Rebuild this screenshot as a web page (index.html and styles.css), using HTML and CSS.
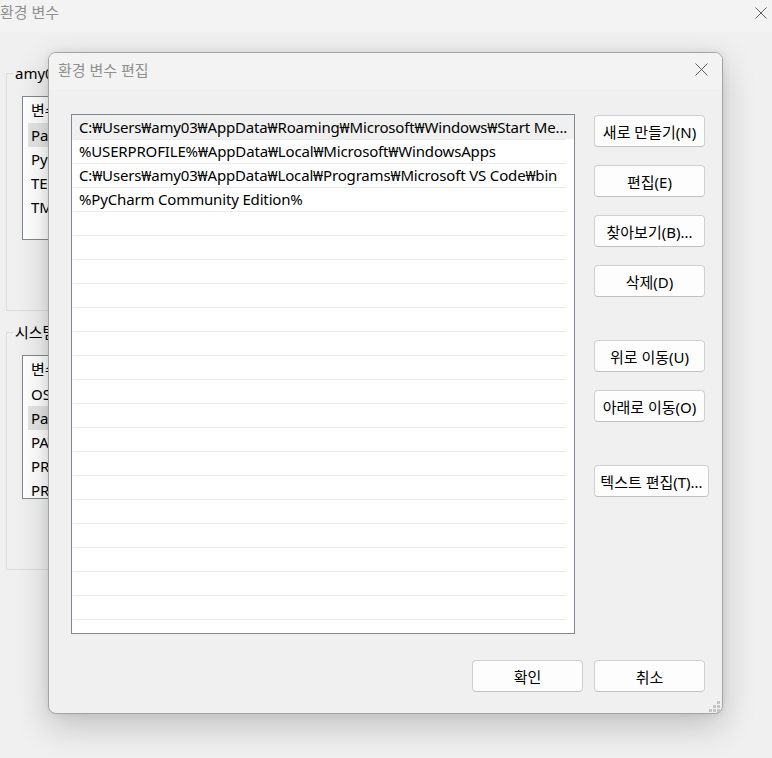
FILE: index.html
```html
<!DOCTYPE html>
<html lang="ko">
<head>
<meta charset="utf-8">
<title>환경 변수 편집</title>
<link rel="stylesheet" href="styles.css">
</head>
<body>
<div class="desktop">
  <div class="bgwin">
    <div class="bg-titlebar">
      <span class="bg-title">환경 변수</span>
      <svg class="close" width="12" height="12" viewBox="0 0 12 12"><path d="M0.5 0.5 L11.5 11.5 M11.5 0.5 L0.5 11.5" stroke="#5f5f5f" stroke-width="1" fill="none"/></svg>
    </div>
    <div class="bg-body">
      <div class="group">
        <div class="group-label">amy03에 대한 사용자 변수(U)</div>
        <div class="lv">
          <div class="lv-head">변수</div>
          <div class="lv-row sel">Path</div>
          <div class="lv-row">PyCharm Community Edition</div>
          <div class="lv-row">TEMP</div>
          <div class="lv-row">TMP</div>
        </div>
      </div>
      <div class="group">
        <div class="group-label">시스템 변수(S)</div>
        <div class="lv">
          <div class="lv-head">변수</div>
          <div class="lv-row">OS</div>
          <div class="lv-row sel">Path</div>
          <div class="lv-row">PATHEXT</div>
          <div class="lv-row">PROCESSOR_ARCHITECTURE</div>
          <div class="lv-row">PROCESSOR_IDENTIFIER</div>
        </div>
      </div>
    </div>
  </div>

  <div class="dialog">
    <div class="dlg-titlebar">
      <span class="dlg-title">환경 변수 편집</span>
      <svg class="close" width="13" height="13" viewBox="0 0 13 13"><path d="M0.5 0.5 L12.5 12.5 M12.5 0.5 L0.5 12.5" stroke="#5f5f5f" stroke-width="1" fill="none"/></svg>
    </div>
    <div class="dlg-body">
      <div class="dlg-main">
        <div class="pathlist">
          <div class="p-row sel">C:₩Users₩amy03₩AppData₩Roaming₩Microsoft₩Windows₩Start Me...</div>
          <div class="p-row">%USERPROFILE%₩AppData₩Local₩Microsoft₩WindowsApps</div>
          <div class="p-row">C:₩Users₩amy03₩AppData₩Local₩Programs₩Microsoft VS Code₩bin</div>
          <div class="p-row">%PyCharm Community Edition%</div>
          <div class="p-row"></div><div class="p-row"></div><div class="p-row"></div><div class="p-row"></div>
          <div class="p-row"></div><div class="p-row"></div><div class="p-row"></div><div class="p-row"></div>
          <div class="p-row"></div><div class="p-row"></div><div class="p-row"></div><div class="p-row"></div>
          <div class="p-row"></div><div class="p-row"></div><div class="p-row"></div><div class="p-row"></div>
          <div class="p-row"></div><div class="p-row"></div>
        </div>
        <div class="btncol">
          <button class="btn">새로 만들기(N)</button>
          <button class="btn">편집(E)</button>
          <button class="btn">찾아보기(B)...</button>
          <button class="btn">삭제(D)</button>
          <button class="btn sep">위로 이동(U)</button>
          <button class="btn">아래로 이동(O)</button>
          <button class="btn sep wide">텍스트 편집(T)...</button>
        </div>
      </div>
      <div class="dlg-footer">
        <button class="btn">확인</button>
        <button class="btn">취소</button>
      </div>
    </div>
    <svg class="grip" width="12" height="12" viewBox="0 0 12 12">
      <rect x="8" y="0" width="3" height="3" fill="#c4c4c4"/>
      <rect x="4" y="4" width="3" height="3" fill="#c4c4c4"/>
      <rect x="8" y="4" width="3" height="3" fill="#c4c4c4"/>
      <rect x="0" y="8" width="3" height="3" fill="#c4c4c4"/>
      <rect x="4" y="8" width="3" height="3" fill="#c4c4c4"/>
      <rect x="8" y="8" width="3" height="3" fill="#c4c4c4"/>
    </svg>
  </div>
</div>
</body>
</html>
```

FILE: styles.css
```css
* { box-sizing: border-box; }

body {
  margin: 0;
  width: 772px;
  height: 758px;
  overflow: hidden;
  background: #f0f0f0;
  font-family: "Noto Sans", "Noto Sans CJK KR", sans-serif;
  font-size: 15px;
  color: #000;
}

.desktop {
  position: relative;
  width: 772px;
  height: 758px;
  overflow: hidden;
}

/* background window */
.bgwin {
  width: 772px;
  height: 758px;
  background: #f0f0f0;
}

.bg-titlebar {
  height: 32px;
  background: #f3f3f3;
  display: flex;
  align-items: flex-start;
  justify-content: space-between;
  padding: 1px 5px 0 0;
}

.bg-title {
  line-height: 22px;
  color: #8f8f8f;
}

.bg-titlebar .close {
  margin-top: 6px;
}

.bg-body {
  padding: 41px 0 0 6px;
}

.group {
  width: 620px;
  height: 238px;
  border: 1px solid #dcdcdc;
  border-radius: 1px;
}

.group + .group {
  margin-top: 21px;
}

.group-label {
  display: block;
  width: max-content;
  margin: -11px 0 0 6px;
  padding: 0 2px;
  height: 20px;
  line-height: 20px;
  background: #f0f0f0;
}

.lv {
  margin: 13px 0 0 15px;
  width: 400px;
  height: 144px;
  border: 1px solid #828790;
  background: #fff;
  overflow: hidden;
}

.lv-head {
  height: 26px;
  line-height: 26px;
  padding-left: 8px;
}

.lv-row {
  height: 24px;
  line-height: 24px;
  margin-left: 5px;
  padding-left: 3px;
}

.lv-row.sel {
  background: #e5e5e5;
}

/* dialog */
.dialog {
  position: absolute;
  left: 48px;
  top: 52px;
  width: 675px;
  height: 662px;
  border: 1px solid #a4a4a4;
  border-radius: 8px;
  background: #f0f0f0;
  box-shadow: 0 12px 34px rgba(0, 0, 0, 0.2), 0 0 8px rgba(0, 0, 0, 0.08);
  overflow: hidden;
}

.dlg-titlebar {
  height: 36px;
  background: #f3f3f3;
  display: flex;
  align-items: center;
  justify-content: space-between;
  padding: 0 14px 3px 9px;
}

.dlg-title {
  color: #8f8f8f;
  line-height: 22px;
}

.dlg-body {
  padding: 25px 17px 0 22px;
}

.dlg-main {
  display: flex;
  align-items: flex-start;
  gap: 19px;
}

.pathlist {
  width: 504px;
  height: 520px;
  border: 1px solid #828790;
  background: #fff;
  overflow: hidden;
  flex: none;
}

.p-row {
  height: 24px;
  line-height: 23px;
  padding: 1px 0 0 7px;
  white-space: nowrap;
  overflow: hidden;
  letter-spacing: -0.16px;
  background: linear-gradient(#ebebeb, #ebebeb) no-repeat 1px 0 / calc(100% - 9px) 1px;
}

.p-row:first-child {
  background: none;
}

.p-row.sel {
  background-color: #f0f0f0;
}

.btncol {
  display: flex;
  flex-direction: column;
  align-items: flex-start;
  padding-top: 1px;
}

.btn {
  width: 111px;
  height: 32px;
  padding: 0;
  border: 1px solid #d0d0d0;
  border-bottom-color: #c2c2c2;
  border-radius: 4px;
  background: #fdfdfd;
  font-family: inherit;
  font-size: 15px;
  color: #000;
  white-space: nowrap;
  text-align: center;
}

.btncol .btn + .btn {
  margin-top: 18px;
}

.btncol .btn.sep {
  margin-top: 43px;
}

.btn.wide {
  width: 115px;
}

.dlg-footer {
  display: flex;
  justify-content: flex-end;
  gap: 11px;
  margin-top: 26px;
}

.grip {
  position: absolute;
  right: 1px;
  bottom: 0px;
}
```
